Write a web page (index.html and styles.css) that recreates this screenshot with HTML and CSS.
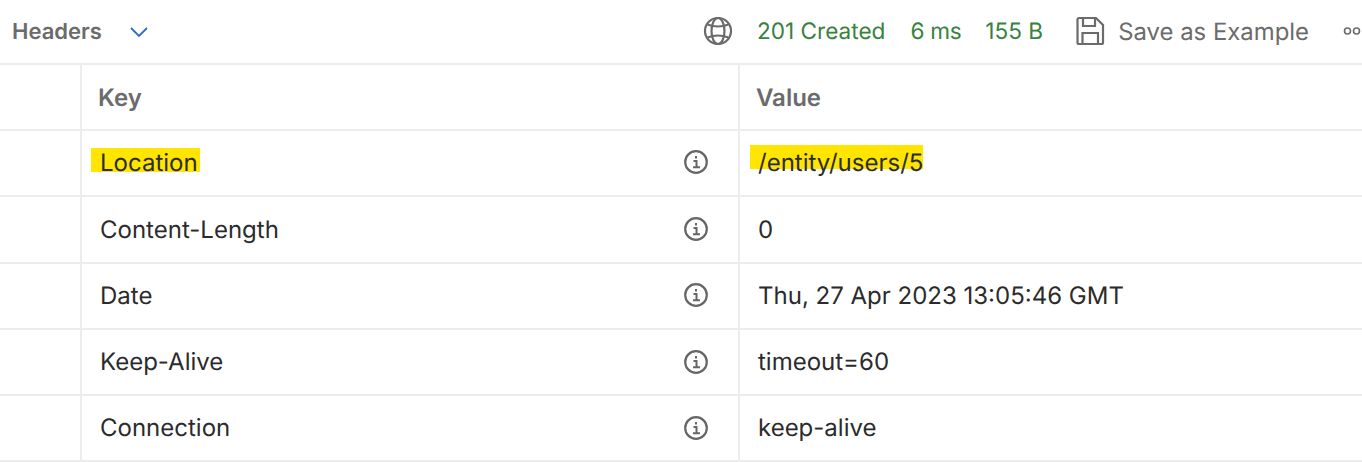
FILE: index.html
```html
<!DOCTYPE html>
<html lang="en">
<head>
<meta charset="utf-8">
<title>Headers</title>
<link rel="stylesheet" href="styles.css">
</head>
<body>
<header class="bar">
  <div class="tab">
    <span class="tab-label">Headers</span>
    <svg class="chev" width="20" height="12" viewBox="0 0 20 12"><path d="M2 2 L10 10 L18 2" fill="none" stroke="#2f6bd0" stroke-width="1.8"/></svg>
  </div>
  <div class="meta">
    <svg class="globe" width="30" height="30" viewBox="0 0 30 30" fill="none" stroke="#6b6b6b" stroke-width="2.2"><circle cx="15" cy="15" r="13"/><ellipse cx="15" cy="15" rx="6.5" ry="13"/><path d="M4.5 8.5 Q15 12.500 25.500 8.500 M4.500 21.500 Q15 17.500 25.500 21.500"/></svg>
    <span class="stat status">201 Created</span>
    <span class="stat time">6 ms</span>
    <span class="stat size">155 B</span>
    <svg class="save" width="30" height="30" viewBox="0 0 30 30" fill="none" stroke="#6b6b6b" stroke-width="2.2"><path d="M2.500 3.500 Q2.500 2 4 2 H21 L28 9 V26.500 Q28 28 26.500 28 H4 Q2.500 28 2.500 26.500 Z"/><path d="M8 2 V10 H20 V2"/><path d="M7.500 28 V17 H23 V28"/></svg>
    <span class="save-label">Save as Example</span>
    <svg class="more" width="20" height="10" viewBox="0 0 20 10" fill="none" stroke="#6b6b6b" stroke-width="1.600"><circle cx="4.500" cy="5" r="3"/><circle cx="13.500" cy="5" r="3"/></svg>
  </div>
</header>
<main class="table">
  <div class="row head">
    <div class="cell check"></div>
    <div class="cell key"><span class="head-key">Key</span></div>
    <div class="cell value"><span class="head-value">Value</span></div>
  </div>
  <div class="row first">
    <div class="cell check"></div>
    <div class="cell key"><span class="mark mark-key"></span><span class="text">Location</span><svg class="info" viewBox="0 0 24 24"><use href="#i"/></svg></div>
    <div class="cell value"><span class="mark mark-value"></span><span class="text">/entity/users/5</span></div>
  </div>
  <div class="row">
    <div class="cell check"></div>
    <div class="cell key"><span class="text">Content-Length</span><svg class="info" viewBox="0 0 24 24"><use href="#i"/></svg></div>
    <div class="cell value"><span class="text">0</span></div>
  </div>
  <div class="row">
    <div class="cell check"></div>
    <div class="cell key"><span class="text">Date</span><svg class="info" viewBox="0 0 24 24"><use href="#i"/></svg></div>
    <div class="cell value"><span class="text">Thu, 27 Apr 2023 13:05:46 GMT</span></div>
  </div>
  <div class="row">
    <div class="cell check"></div>
    <div class="cell key"><span class="text">Keep-Alive</span><svg class="info" viewBox="0 0 24 24"><use href="#i"/></svg></div>
    <div class="cell value"><span class="text">timeout=60</span></div>
  </div>
  <div class="row">
    <div class="cell check"></div>
    <div class="cell key"><span class="text">Connection</span><svg class="info" viewBox="0 0 24 24"><use href="#i"/></svg></div>
    <div class="cell value"><span class="text">keep-alive</span></div>
  </div>
</main>
<svg class="defs" width="0" height="0"><defs><g id="i" fill="none" stroke="#666"><circle cx="12" cy="12" r="10.800" stroke-width="2.200"/><path d="M9.500 11 H12.500 V17 M9 17.200 H16" stroke-width="2"/><path d="M11 7.200 H13" stroke-width="2.400"/></g></defs></svg>
</body>
</html>
```
FILE: styles.css
```css
* { box-sizing: border-box; }
html, body { margin: 0; padding: 0; }
body {
  width: 1362px;
  height: 462px;
  overflow: hidden;
  background: #fff;
  font-family: Inter, "Liberation Sans", sans-serif;
  font-size: 24px;
  color: #2b2b2b;
  text-rendering: geometricPrecision;
}
.bar {
  height: 65px;
  border-bottom: 2px solid #ededed;
  display: flex;
  align-items: center;
  justify-content: space-between;
  padding-left: 12px;
}
.tab { display: flex; align-items: center; }
.tab-label { font-weight: 600; font-size: 22px; color: #6b6b6b; }
.chev { margin-left: 27px; }
.meta { display: flex; align-items: center; white-space: nowrap; padding-bottom: 1px; }
.stat { color: #388240; font-size: 22.600px; }
.status { margin-left: 24px; }
.time { margin-left: 25px; letter-spacing: -0.300px; }
.size { margin-left: 24px; }
.save { margin-left: 32px; }
.save-label { margin-left: 13px; color: #6b6b6b; font-size: 23.900px; }
.more { margin-left: 34px; margin-right: -1px; }
.globe, .save, .more { flex: none; }

.table { display: flex; flex-direction: column; }
.row {
  height: 66.200px;
  display: grid;
  grid-template-columns: 82px 658px 1fr;
  border-bottom: 2px solid #ededed;
}
.cell {
  position: relative;
  display: flex;
  align-items: center;
  min-width: 0;
  padding-bottom: 0.400px;
}
.head .cell { padding-bottom: 0; }
.first .cell { padding-bottom: 2px; }
.check, .key { border-right: 2px solid #ededed; }
.key { padding-left: 18px; justify-content: space-between; padding-right: 30px; }
.value { padding-left: 18px; }
.head-key, .head-value { font-weight: 600; font-size: 24px; color: #6b6b6b; }
.key .head-key { margin-left: -2px; }
.value .head-value { margin-left: -2px; }
.text { position: relative; }
.info { width: 24px; height: 24px; flex: none; }
.mark { position: absolute; background: #ffe500; height: 24px; }
.mark-key { left: 9px; top: 17px; width: 109px; }
.mark-value { left: 10px; top: 14px; width: 173px; }
.defs { position: absolute; }
```
